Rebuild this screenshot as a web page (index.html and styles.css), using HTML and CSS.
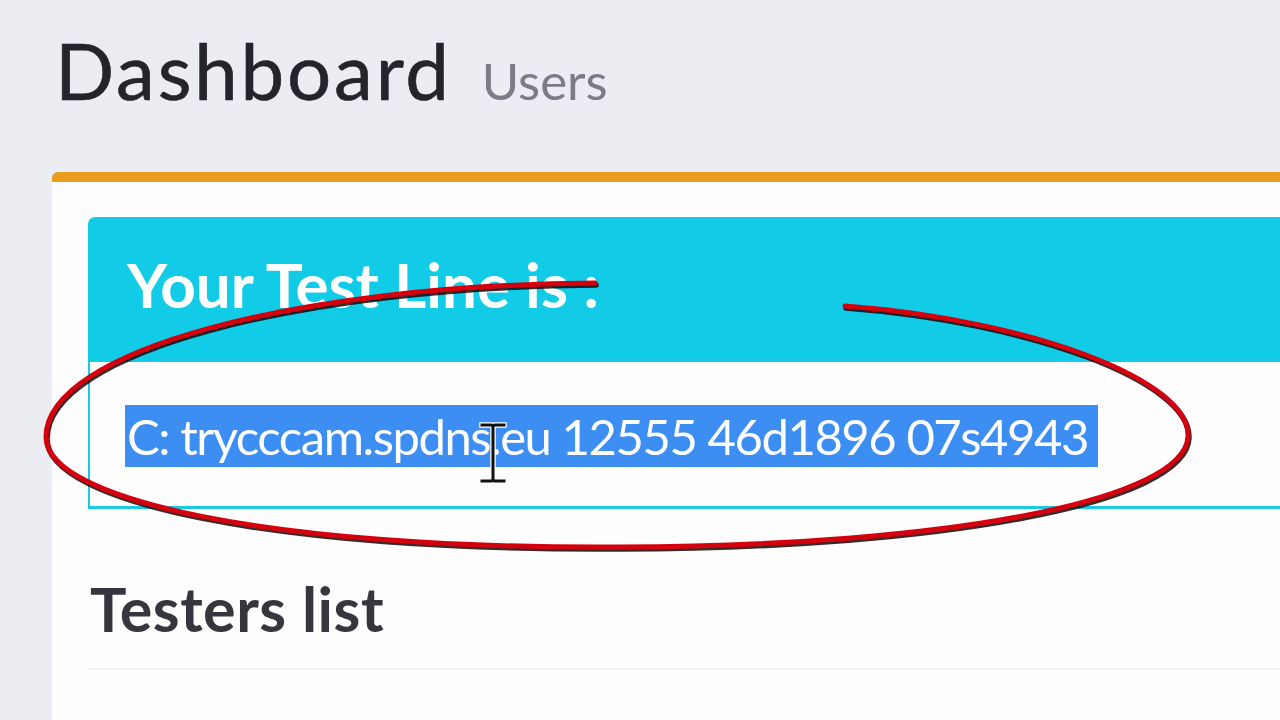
FILE: index.html
```html
<!DOCTYPE html>
<html lang="en">
<head>
<meta charset="utf-8">
<title>Dashboard - Users</title>
<link rel="stylesheet" href="styles.css">
</head>
<body>
<div class="page">
  <header class="content-header">
    <h1 class="title">Dashboard<small class="subtitle">Users</small></h1>
  </header>
  <section class="box">
    <div class="callout">
      <div class="callout-head">Your Test Line is :</div>
      <div class="callout-body">
        <span class="line-text">C: trycccam.spdns.eu 12555 46d1896 07s4943</span>
      </div>
    </div>
    <div class="list-header">
      <h2 class="list-title">Testers list</h2>
    </div>
  </section>

  <svg class="annotation" width="1280" height="720" viewBox="0 0 1280 720" aria-hidden="true">
    <path class="ring-shadow" transform="translate(1 2)" d="M 845 306 C 1030 320, 1190 380, 1188 436 C 1186 500, 950 546, 620 547 C 270 549, 46 500, 46 437 C 46 350, 300 285, 595 283"/>
    <path class="ring" d="M 845 306 C 1030 320, 1190 380, 1188 436 C 1186 500, 950 546, 620 547 C 270 549, 46 500, 46 437 C 46 350, 300 285, 595 283"/>
  </svg>

  <svg class="ibeam" width="28" height="62" viewBox="0 0 28 62" aria-hidden="true">
    <path class="ibeam-outline" d="M3 3 H12 Q14 3 14 5 Q14 3 16 3 H25 M14 5 V57 M3 59 H12 Q14 59 14 57 Q14 59 16 59 H25"/>
    <path class="ibeam-stroke" d="M3 3 H12 Q14 3 14 5 Q14 3 16 3 H25 M14 5 V57 M3 59 H12 Q14 59 14 57 Q14 59 16 59 H25"/>
  </svg>
</div>
</body>
</html>
```

FILE: styles.css
```css
html, body {
  margin: 0;
  padding: 0;
}

body {
  background: #ebedf3;
  font-family: "Lato", "Open Sans", "DejaVu Sans", sans-serif;
  overflow: hidden;
}

.page {
  position: relative;
  width: 1280px;
  height: 720px;
  overflow: hidden;
}

.content-header {
  padding: 25px 0 0 55px;
  height: 172px;
  box-sizing: border-box;
}

.title {
  margin: 0;
  font-size: 78px;
  font-weight: 400;
  line-height: 1.16;
  color: #25242b;
  letter-spacing: 2.8px;
  white-space: nowrap;
  -webkit-text-stroke: 0.6px #25242b;
}

.subtitle {
  font-size: 51px;
  color: #7b7c86;
  margin-left: 30px;
  letter-spacing: 0;
  -webkit-text-stroke: 0;
}

.box {
  margin-left: 52px;
  margin-right: -60px;
  background: #fdfdfd;
  border-top: 10px solid #e89d1c;
  border-top-left-radius: 6px;
  padding: 35px 0 0 36px;
  height: 700px;
}

.callout {
  display: flex;
  flex-direction: column;
}

.callout-head {
  height: 145px;
  box-sizing: border-box;
  padding: 30px 0 0 39px;
  background: #12cbe6;
  border-top-left-radius: 7px;
  color: #ffffff;
  font-size: 62px;
  font-weight: 700;
  line-height: 1.2;
  white-space: nowrap;
}

.callout-body {
  height: 147px;
  box-sizing: border-box;
  border-left: 2px solid #1cc9e2;
  border-bottom: 3px solid #1cc9e2;
  padding: 43px 0 0 35px;
  background: #fefefe;
}

.line-text {
  display: inline-block;
  height: 62px;
  line-height: 62px;
  padding: 0 10px 0 2px;
  background: #3d8ef2;
  color: #ffffff;
  font-size: 49px;
  letter-spacing: -1.45px;
  white-space: nowrap;
}

.list-header {
  margin-top: 63px;
  padding: 0 0 23px 2px;
  border-bottom: 2px solid #f2f2f4;
}

.list-title {
  margin: 0;
  font-size: 61px;
  font-weight: 700;
  line-height: 1.2;
  color: #37363e;
  letter-spacing: 0.5px;
}

.annotation {
  position: absolute;
  left: 0;
  top: 0;
  pointer-events: none;
}

.ring, .ring-shadow {
  fill: none;
  stroke-linecap: round;
  stroke-linejoin: round;
}

.ring-shadow {
  stroke: #1a0505;
  stroke-width: 5.5;
  opacity: 0.85;
}

.ring {
  stroke: #d4000e;
  stroke-width: 5;
}

.ibeam {
  position: absolute;
  left: 479px;
  top: 422px;
  pointer-events: none;
}

.ibeam-outline, .ibeam-stroke {
  fill: none;
  stroke-linecap: square;
}

.ibeam-outline {
  stroke: #ffffff;
  stroke-width: 5.5;
}

.ibeam-stroke {
  stroke: #111111;
  stroke-width: 3;
}
```
